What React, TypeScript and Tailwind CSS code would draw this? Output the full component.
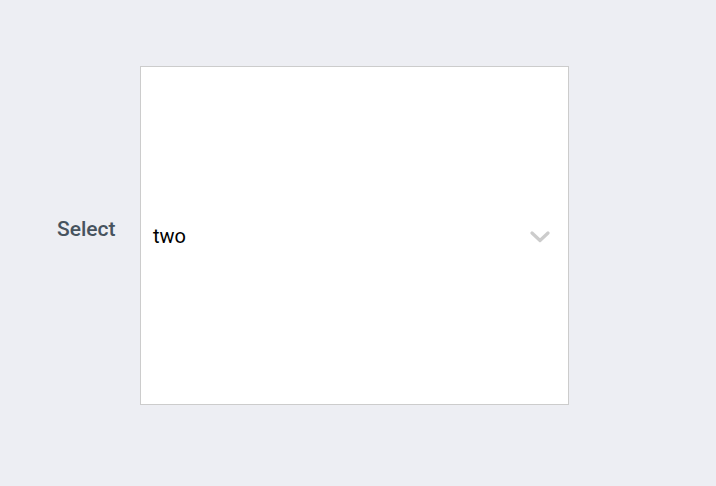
import React from "react";

export default function App() {
  return (
    <div className="min-h-screen bg-[#edeef3] pt-[66px] pl-[57px] flex items-start" style={{ fontFamily: "Roboto, sans-serif" }}>
      <div className="w-[83px] h-[339px] flex items-center pb-[11px]">
        <span className="text-[21px] font-medium text-[#47535e]">Select</span>
      </div>
      <div className="w-[429px] h-[339px] bg-white border border-[#cccccc] flex items-center justify-between pl-[12px] pr-[18px]">
        <span className="text-[20px] text-black">two</span>
        <svg className="mt-[3px]" width="20" height="12" viewBox="0 0 20 12" fill="none">
          <path d="M2 2l8 7.5L18 2" stroke="#cccccc" strokeWidth="3.2" strokeLinecap="round" strokeLinejoin="round" />
        </svg>
      </div>
    </div>
  );
}
